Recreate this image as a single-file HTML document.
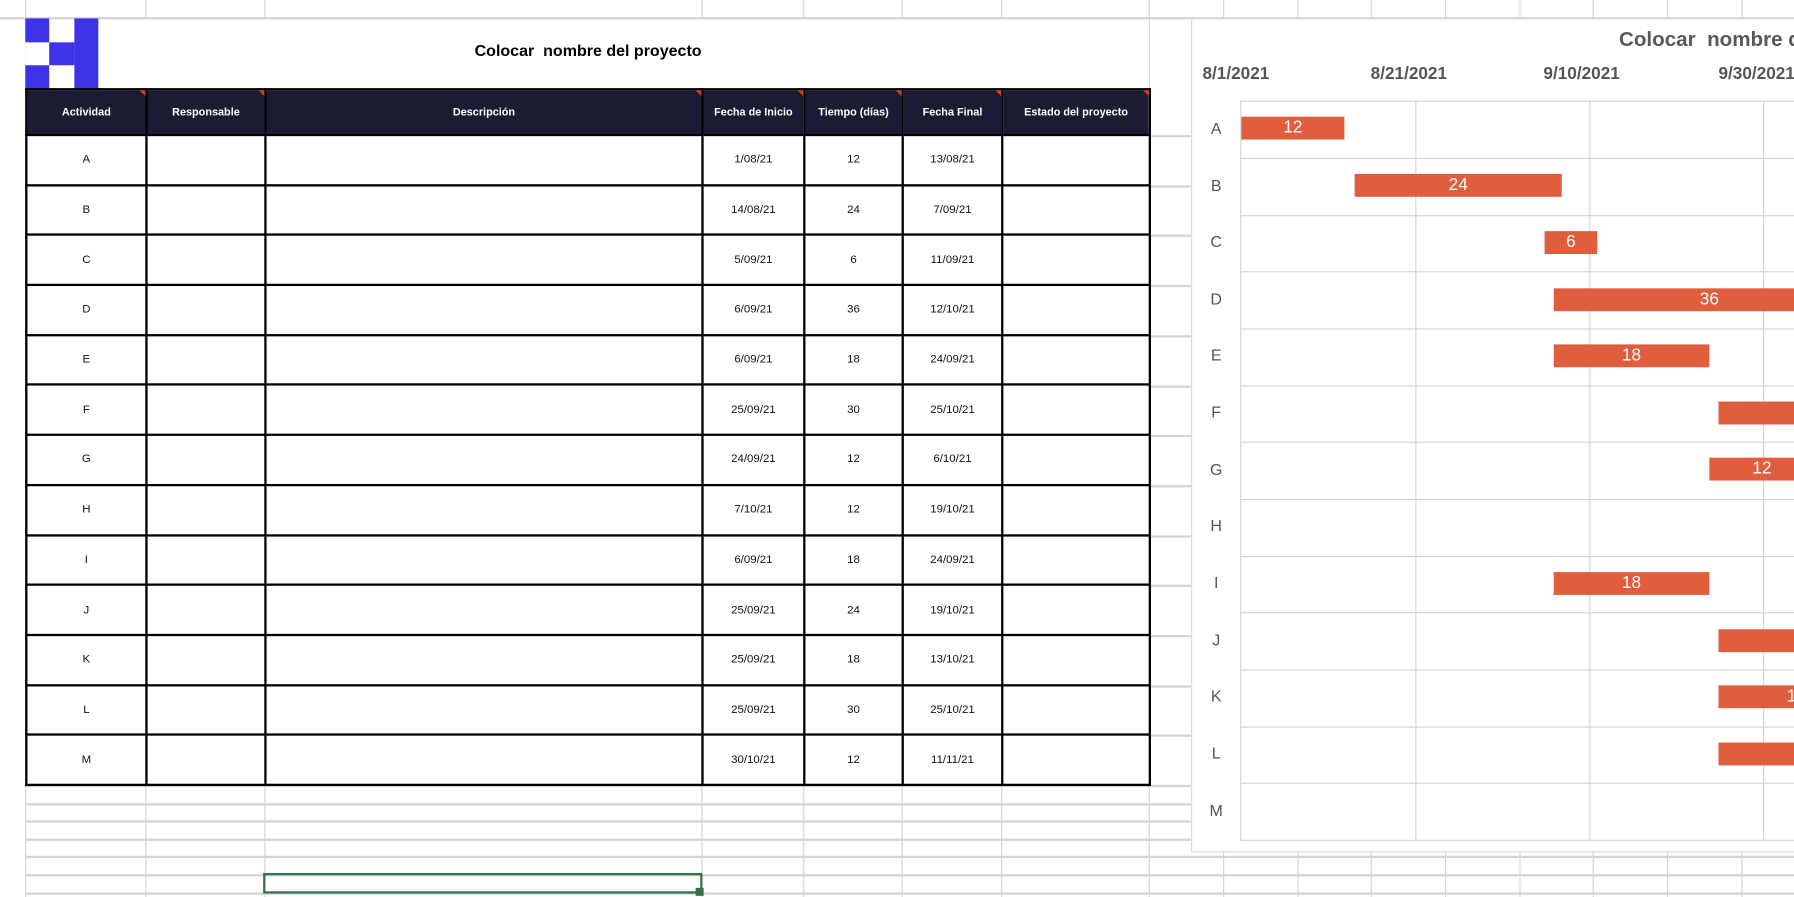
<!DOCTYPE html>
<html><head><meta charset="utf-8"><style>
html,body{margin:0;padding:0;background:#fff;overflow:hidden;width:1794px;height:896px}
#w{position:absolute;left:0;top:0;width:1568px;height:784px;transform:scale(1.14413);transform-origin:0 0;font-family:"Liberation Sans",sans-serif}
.a{position:absolute}
.gh{position:absolute;height:1px;background:#d4d4d4}
.gv{position:absolute;width:1px;background:#d4d4d4}
table{position:absolute;left:22px;top:77px;border-collapse:collapse;table-layout:fixed;border:2px solid #000}
td{border:2px solid #000;text-align:center;font-size:10px;height:41.7px;padding:0;color:#111}
th{background:#1b1c33;color:#fff;font-size:9.5px;font-weight:bold;height:38px;border:2px solid #000;position:relative;padding:0}
th:after{content:"";position:absolute;right:0;top:0;border-top:5px solid #e03a1e;border-left:5px solid transparent}
.bar{position:absolute;height:20px;background:#e05e3e;color:#fff;font-size:15px;text-align:center;line-height:20px}
.lab{position:absolute;left:1050px;width:26px;text-align:center;color:#555;font-size:14px}
.dt{position:absolute;top:56px;color:#555;font-size:15px;font-weight:bold}
</style></head><body><div id="w">
<div class="gh" style="left:0;top:15px;width:1568px;height:2px"></div>
<div class="gv" style="left:22px;top:0;height:784px"></div>
<div class="gv" style="left:127px;top:0;height:784px"></div>
<div class="gv" style="left:231px;top:0;height:784px"></div>
<div class="gv" style="left:613px;top:0;height:784px"></div>
<div class="gv" style="left:702px;top:0;height:784px"></div>
<div class="gv" style="left:788px;top:0;height:784px"></div>
<div class="gv" style="left:875px;top:0;height:784px"></div>
<div class="gv" style="left:1004px;top:0;height:784px"></div>
<div class="gv" style="left:1069px;top:0;height:784px"></div>
<div class="gv" style="left:1134px;top:0;height:784px"></div>
<div class="gv" style="left:1198px;top:0;height:784px"></div>
<div class="gv" style="left:1263px;top:0;height:784px"></div>
<div class="gv" style="left:1328px;top:0;height:784px"></div>
<div class="gv" style="left:1392px;top:0;height:784px"></div>
<div class="gv" style="left:1457px;top:0;height:784px"></div>
<div class="gv" style="left:1522px;top:0;height:784px"></div>
<div class="gh" style="left:1004px;top:118px;width:40px;height:2px"></div>
<div class="gh" style="left:1004px;top:162px;width:40px;height:2px"></div>
<div class="gh" style="left:1004px;top:205px;width:40px;height:2px"></div>
<div class="gh" style="left:1004px;top:249px;width:40px;height:2px"></div>
<div class="gh" style="left:1004px;top:293px;width:40px;height:2px"></div>
<div class="gh" style="left:1004px;top:337px;width:40px;height:2px"></div>
<div class="gh" style="left:1004px;top:380px;width:40px;height:2px"></div>
<div class="gh" style="left:1004px;top:424px;width:40px;height:2px"></div>
<div class="gh" style="left:1004px;top:468px;width:40px;height:2px"></div>
<div class="gh" style="left:1004px;top:511px;width:40px;height:2px"></div>
<div class="gh" style="left:1004px;top:555px;width:40px;height:2px"></div>
<div class="gh" style="left:1004px;top:599px;width:40px;height:2px"></div>
<div class="gh" style="left:1004px;top:642px;width:40px;height:2px"></div>
<div class="gh" style="left:22px;top:686px;width:1546px;height:2px"></div>
<div class="gh" style="left:22px;top:702px;width:1546px;height:2px"></div>
<div class="gh" style="left:22px;top:717px;width:1546px;height:2px"></div>
<div class="gh" style="left:22px;top:733px;width:1546px;height:2px"></div>
<div class="gh" style="left:22px;top:748px;width:1546px;height:2px"></div>
<div class="gh" style="left:22px;top:764px;width:1546px;height:2px"></div>
<div class="gh" style="left:22px;top:780px;width:1546px;height:2px"></div>
<div class="a" style="left:22px;top:17px;width:982px;height:60px;background:#fff"></div>
<svg class="a" style="left:22px;top:16px" width="64" height="62"><g fill="#3f33e8"><rect x="0" y="0" width="21" height="21"/><rect x="43" y="0" width="21" height="62"/><rect x="21" y="21" width="22" height="20"/><rect x="0" y="41" width="21" height="21"/></g></svg>
<div class="a" style="left:300px;top:36px;width:428px;text-align:center;font-size:14px;font-weight:bold;color:#000">Colocar&nbsp; nombre del proyecto</div>
<table>
<colgroup><col style="width:105px"><col style="width:104px"><col style="width:382px"><col style="width:89px"><col style="width:86px"><col style="width:87px"><col style="width:129px"></colgroup>
<tr><th>Actividad</th><th>Responsable</th><th>Descripción</th><th>Fecha de Inicio</th><th>Tiempo (días)</th><th>Fecha Final</th><th>Estado del proyecto</th></tr>
<tr><td>A</td><td></td><td></td><td>1/08/21</td><td>12</td><td>13/08/21</td><td></td></tr>
<tr><td>B</td><td></td><td></td><td>14/08/21</td><td>24</td><td>7/09/21</td><td></td></tr>
<tr><td>C</td><td></td><td></td><td>5/09/21</td><td>6</td><td>11/09/21</td><td></td></tr>
<tr><td>D</td><td></td><td></td><td>6/09/21</td><td>36</td><td>12/10/21</td><td></td></tr>
<tr><td>E</td><td></td><td></td><td>6/09/21</td><td>18</td><td>24/09/21</td><td></td></tr>
<tr><td>F</td><td></td><td></td><td>25/09/21</td><td>30</td><td>25/10/21</td><td></td></tr>
<tr><td>G</td><td></td><td></td><td>24/09/21</td><td>12</td><td>6/10/21</td><td></td></tr>
<tr><td>H</td><td></td><td></td><td>7/10/21</td><td>12</td><td>19/10/21</td><td></td></tr>
<tr><td>I</td><td></td><td></td><td>6/09/21</td><td>18</td><td>24/09/21</td><td></td></tr>
<tr><td>J</td><td></td><td></td><td>25/09/21</td><td>24</td><td>19/10/21</td><td></td></tr>
<tr><td>K</td><td></td><td></td><td>25/09/21</td><td>18</td><td>13/10/21</td><td></td></tr>
<tr><td>L</td><td></td><td></td><td>25/09/21</td><td>30</td><td>25/10/21</td><td></td></tr>
<tr><td>M</td><td></td><td></td><td>30/10/21</td><td>12</td><td>11/11/21</td><td></td></tr>
</table>
<div class="a" style="left:230px;top:763px;width:384px;height:18px;border:2px solid #3a7048;box-sizing:border-box"></div>
<div class="a" style="left:608px;top:776px;width:7px;height:7px;background:#3a7048"></div>
<div class="a" style="left:1041px;top:16px;width:540px;height:729px;background:#fff;border:1px solid #d9d9d9;box-sizing:border-box"></div>
<div class="a" style="left:1415px;top:24px;font-size:18px;font-weight:bold;color:#595959;white-space:nowrap">Colocar&nbsp; nombre del</div>
<div class="dt" style="left:1051px">8/1/2021</div>
<div class="dt" style="left:1198px">8/21/2021</div>
<div class="dt" style="left:1349px">9/10/2021</div>
<div class="dt" style="left:1502px">9/30/2021</div>
<div class="gv" style="left:1084px;top:88px;height:646px"></div>
<div class="gv" style="left:1237px;top:88px;height:646px"></div>
<div class="gv" style="left:1389px;top:88px;height:646px"></div>
<div class="gv" style="left:1541px;top:88px;height:646px"></div>
<div class="gh" style="left:1084px;top:88px;width:484px"></div>
<div class="gh" style="left:1084px;top:138px;width:484px"></div>
<div class="gh" style="left:1084px;top:188px;width:484px"></div>
<div class="gh" style="left:1084px;top:237px;width:484px"></div>
<div class="gh" style="left:1084px;top:287px;width:484px"></div>
<div class="gh" style="left:1084px;top:337px;width:484px"></div>
<div class="gh" style="left:1084px;top:386px;width:484px"></div>
<div class="gh" style="left:1084px;top:436px;width:484px"></div>
<div class="gh" style="left:1084px;top:486px;width:484px"></div>
<div class="gh" style="left:1084px;top:535px;width:484px"></div>
<div class="gh" style="left:1084px;top:585px;width:484px"></div>
<div class="gh" style="left:1084px;top:635px;width:484px"></div>
<div class="gh" style="left:1084px;top:684px;width:484px"></div>
<div class="gh" style="left:1084px;top:734px;width:484px"></div>
<div class="lab" style="top:104px">A</div>
<div class="lab" style="top:154px">B</div>
<div class="lab" style="top:203px">C</div>
<div class="lab" style="top:253px">D</div>
<div class="lab" style="top:302px">E</div>
<div class="lab" style="top:352px">F</div>
<div class="lab" style="top:402px">G</div>
<div class="lab" style="top:451px">H</div>
<div class="lab" style="top:501px">I</div>
<div class="lab" style="top:551px">J</div>
<div class="lab" style="top:600px">K</div>
<div class="lab" style="top:650px">L</div>
<div class="lab" style="top:700px">M</div>
<div class="bar" style="left:1085px;top:102px;width:90px">12</div>
<div class="bar" style="left:1184px;top:152px;width:181px">24</div>
<div class="bar" style="left:1350px;top:202px;width:46px">6</div>
<div class="bar" style="left:1358px;top:252px;width:272px">36</div>
<div class="bar" style="left:1358px;top:301px;width:136px">18</div>
<div class="bar" style="left:1502px;top:351px;width:220px">30</div>
<div class="bar" style="left:1494px;top:400px;width:92px">12</div>
<div class="bar" style="left:1358px;top:500px;width:136px">18</div>
<div class="bar" style="left:1502px;top:550px;width:182px">24</div>
<div class="bar" style="left:1502px;top:599px;width:136px">18</div>
<div class="bar" style="left:1502px;top:649px;width:228px">30</div>
</div></body></html>
